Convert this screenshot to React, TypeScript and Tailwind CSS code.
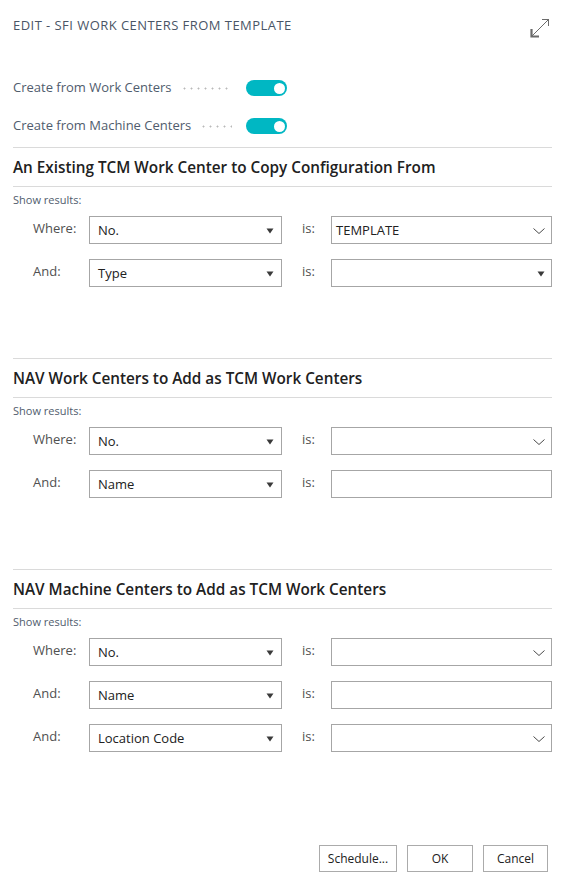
import React from "react";

const FONT = { fontFamily: '"Open Sans", "Noto Sans", "Liberation Sans", sans-serif' };

function ExpandIcon() {
  return (
    <svg width="22" height="22" viewBox="0 0 22 22" fill="none">
      <line x1="2.5" y1="19.5" x2="20" y2="2" stroke="#6b6b6b" strokeWidth="1" />
      <polyline points="13,2.5 19.5,2.5 19.5,9" stroke="#6b6b6b" strokeWidth="1" fill="none" />
      <polyline points="2.5,12 2.5,19.5 10,19.5" stroke="#6b6b6b" strokeWidth="2.2" fill="none" />
    </svg>
  );
}

function Toggle({ label }: { label: string }) {
  return (
    <div className="flex h-[38px] items-center">
      <div className="flex w-[219px] items-center">
        <span className="text-[13px] text-[#505c6d] whitespace-nowrap">{label}</span>
        <div className="ml-[9px] h-[3px] flex-1 bg-[radial-gradient(circle,#b9b9b9_0.9px,transparent_1.1px)] bg-[length:7px_3px] bg-repeat-x" />
      </div>
      <div className="ml-[14px] flex h-[16px] w-[41px] items-center justify-end rounded-full bg-[#00b7c3] pr-[2px]">
        <div className="h-[11px] w-[11px] rounded-full bg-white" />
      </div>
    </div>
  );
}

function Caret() {
  return (
    <svg width="8" height="6" viewBox="0 0 8 6">
      <polygon points="0.5,0.5 7.5,0.5 4,5.5" fill="#3a3a3a" />
    </svg>
  );
}

function Chevron() {
  return (
    <svg width="12" height="8" viewBox="0 0 12 8" fill="none">
      <polyline points="0.5,1.5 6,6.5 11.5,1.5" stroke="#4a4a4a" strokeWidth="1" />
    </svg>
  );
}

type Row = { label: string; field: string; value?: string; kind: "chevron" | "caret" | "text" };

function FilterRow({ row }: { row: Row }) {
  return (
    <div className="flex items-start">
      <div className="w-[76px] pl-[20px] pt-[3px] text-[13px] leading-[18px] text-[#505050] whitespace-nowrap">
        {row.label}
      </div>
      <div className="flex h-[28px] w-[193px] items-center justify-between border border-[#a6a6a6] pl-[8px] pr-[7px] pt-[2px] text-[13px] text-[#212121]">
        <span>{row.field}</span>
        <Caret />
      </div>
      <div className="w-[49px] pl-[20px] pt-[3px] text-[13px] leading-[18px] text-[#505050]">is:</div>
      <div className="flex h-[28px] w-[221px] items-center justify-between border border-[#a6a6a6] pl-[4px] pr-[6px] pt-[1px] text-[13px] text-[#212121]">
        <span>{row.value ?? ""}</span>
        {row.kind === "chevron" && <Chevron />}
        {row.kind === "caret" && <Caret />}
      </div>
    </div>
  );
}

function Section({ title, rows, last }: { title: string; rows: Row[]; last?: boolean }) {
  return (
    <div className={last ? "" : "pb-[71px]"}>
      <div className="border-t border-[#dadada]" />
      <div className="flex h-[38px] items-center text-[15.3px] font-semibold text-[#212121]">{title}</div>
      <div className="border-t border-[#dadada]" />
      <div className="pt-[5px] text-[11px] leading-[15px] text-[#505c6d]">Show results:</div>
      <div className="mt-[9px] flex flex-col gap-[15px]">
        {rows.map((r, i) => (
          <FilterRow key={i} row={r} />
        ))}
      </div>
    </div>
  );
}

function Button({ children, width }: { children: React.ReactNode; width: string }) {
  return (
    <button className={`flex h-[27px] items-center justify-center border border-[#ababab] bg-white text-[12px] text-[#212121] ${width}`}>
      {children}
    </button>
  );
}

export default function App() {
  return (
    <div style={FONT} className="flex h-[887px] w-[564px] flex-col bg-white">
      <div className="flex items-start justify-between pl-[13px] pr-[13px] pt-[15px]">
        <div className="text-[13px] leading-[20px] font-medium tracking-[0.45px] text-[#4a5566]">
          EDIT - SFI WORK CENTERS FROM TEMPLATE
        </div>
        <div className="pt-[2px]">
          <ExpandIcon />
        </div>
      </div>

      <div className="mt-[30px] px-[13px]">
        <Toggle label="Create from Work Centers" />
        <Toggle label="Create from Machine Centers" />
      </div>

      <div className="mt-[2px] pl-[13px] pr-[12px]">
        <Section
          title="An Existing TCM Work Center to Copy Configuration From"
          rows={[
            { label: "Where:", field: "No.", value: "TEMPLATE", kind: "chevron" },
            { label: "And:", field: "Type", kind: "caret" },
          ]}
        />
        <Section
          title="NAV Work Centers to Add as TCM Work Centers"
          rows={[
            { label: "Where:", field: "No.", kind: "chevron" },
            { label: "And:", field: "Name", kind: "text" },
          ]}
        />
        <Section
          title="NAV Machine Centers to Add as TCM Work Centers"
          last
          rows={[
            { label: "Where:", field: "No.", kind: "chevron" },
            { label: "And:", field: "Name", kind: "text" },
            { label: "And:", field: "Location Code", kind: "chevron" },
          ]}
        />
      </div>

      <div className="mt-auto flex justify-end gap-[10px] pb-[15px] pr-[16px]">
        <Button width="w-[78px]">Schedule...</Button>
        <Button width="w-[66px]">OK</Button>
        <Button width="w-[65px]">Cancel</Button>
      </div>
    </div>
  );
}
